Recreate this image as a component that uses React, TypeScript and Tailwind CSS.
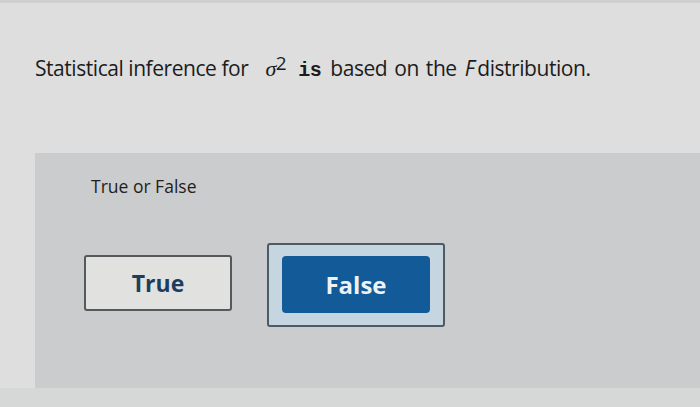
export default function App() {
  return (
    <main className="flex h-[407px] w-[700px] flex-col overflow-hidden bg-[#dedede] font-['Open_Sans',sans-serif] text-[#1c1c1c]">
      <div className="h-[3px] bg-[#cfcfcf]" />

      {/* Question */}
      <p className="ml-[35px] mt-[49px] flex h-[30px] items-baseline text-[21px] tracking-[-0.45px]">
        <span>Statistical inference for</span>
        <span className="ml-[17px] font-['Liberation_Serif',serif] text-[22px] italic">σ</span>
        <sup className="relative -top-[6px] text-[19px]">2</sup>
        <span className="ml-[12px] font-['Liberation_Mono',monospace] text-[20px] font-semibold">is</span>
        <span className="ml-[9px] [word-spacing:2px]">based on the</span>
        <span className="ml-[8px] mr-[3px] italic">F</span>
        <span>distribution.</span>
      </p>

      {/* Answer panel */}
      <section className="ml-[35px] mt-[71px] h-[235px] bg-[#cbcccd] pl-[56px] pt-[21px]">
        <p className="text-[17.5px] leading-[24px] tracking-[0px] text-[#1e1e1e]">True or False</p>
        <div className="mt-[45px] flex items-start">
          <button className="ml-[-7px] mt-[12px] h-[56px] w-[148px] rounded-[3px] border-2 border-[#56595c] bg-[#e1e1df] text-[23px] font-bold text-[#1d3d5e]">
            True
          </button>
          <div className="ml-[35px] rounded-[3px] border-2 border-[#4e5a64] bg-[#c6d6e0] px-[13px] pb-[12px] pt-[11px]">
            <button className="h-[57px] w-[148px] rounded-[4px] bg-[#125a98] text-[24px] font-bold text-[#eef2f4]">
              False
            </button>
          </div>
        </div>
      </section>

      <div className="flex-1 bg-[#d6d7d7]" />
    </main>
  );
}
